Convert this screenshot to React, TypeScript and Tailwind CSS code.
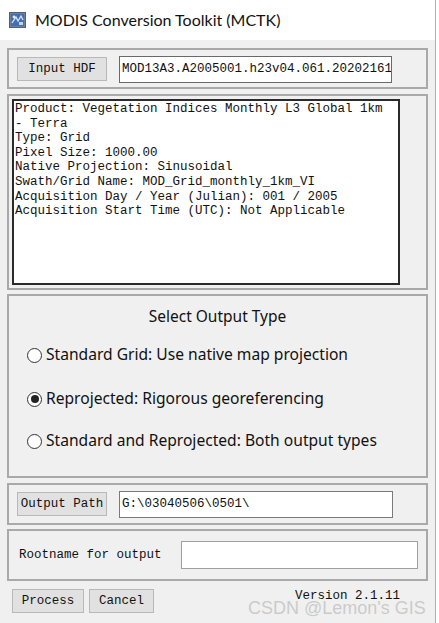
import React from 'react';

const mono = "font-['Liberation_Mono',monospace]";
const ui = "font-['Lato','Noto_Sans',sans-serif]";
const ui2 = "font-['Noto_Sans','Open_Sans',sans-serif]";

const Panel: React.FC<{ className?: string; children: React.ReactNode }> = ({ className = '', children }) => (
  <div className={`w-[421px] border-2 border-[#a9a9a9] ${className}`}>{children}</div>
);

const WinButton: React.FC<{ label: string; className?: string }> = ({ label, className = '' }) => (
  <button className={`h-[24px] bg-[#e1e1e1] border border-[#b8b8b8] text-[12.5px] text-[#111] ${mono} ${className}`}>
    {label}
  </button>
);

const Radio: React.FC<{ checked?: boolean; label: string; className?: string }> = ({ checked, label, className = '' }) => (
  <label className={`flex items-center h-[20px] ${className}`}>
    <span className="w-[15px] h-[15px] rounded-full border border-[#333] bg-white flex items-center justify-center">
      {checked && <span className="w-[8px] h-[8px] rounded-full bg-[#222]" />}
    </span>
    <span className={`ml-[4px] text-[15.6px] text-[#111] ${ui2}`}>{label}</span>
  </label>
);

const info = [
  'Product: Vegetation Indices Monthly L3 Global 1km',
  '- Terra',
  'Type: Grid',
  'Pixel Size: 1000.00',
  'Native Projection: Sinusoidal',
  'Swath/Grid Name: MOD_Grid_monthly_1km_VI',
  'Acquisition Day / Year (Julian): 001 / 2005',
  'Acquisition Start Time (UTC): Not Applicable',
];

export default function App() {
  return (
    <div className="w-[439px] h-[623px] bg-white overflow-hidden">
      <div className="w-[436px] h-full border-r border-[#b0b0b0] flex flex-col">
        {/* title bar */}
        <div className="h-[40px] bg-white flex items-center pl-[9px] shrink-0">
          <svg width="17" height="16" viewBox="0 0 17 16">
            <rect x="0.5" y="0.5" width="16" height="15" fill="#6e7f99" stroke="#55606e" />
            <rect x="2" y="2" width="13" height="12" fill="#3f6fb8" />
            <path d="M3 11 L7 5 L9 9 L12 4 L14 8" stroke="#dfe8f5" strokeWidth="1.3" fill="none" />
            <circle cx="5" cy="5" r="1.4" fill="#e6eef8" />
            <rect x="10" y="10" width="4" height="3" fill="#c8d4e4" />
          </svg>
          <span className={`ml-[9px] text-[16px] text-[#111] ${ui}`}>MODIS Conversion Toolkit (MCTK)</span>
        </div>

        {/* body */}
        <div className="flex-1 bg-[#f0f0f0] pl-[7px] pt-[8px] flex flex-col">
          <Panel className="h-[41px] flex items-center pl-[8px] pt-[1px]">
            <WinButton label="Input HDF" className="w-[90px]" />
            <div className={`ml-[12px] w-[273px] h-[27px] bg-white border border-[#6a6a6a] flex items-center pl-[2px] text-[12.5px] text-[#111] ${mono} overflow-hidden whitespace-nowrap`}>
              MOD13A3.A2005001.h23v04.061.20202161
            </div>
          </Panel>

          <Panel className="h-[196px] mt-[5px] pl-[3px] pt-[3px]">
            <div className={`w-[388px] h-[186px] bg-white border-2 border-[#2a2a2a] pl-[1px] pt-[1px] text-[12.5px] leading-[14.6px] text-[#111] ${mono}`}>
              {info.map((l) => (
                <div key={l} className="whitespace-pre">{l}</div>
              ))}
            </div>
          </Panel>

          <Panel className="h-[184px] mt-[4px] pt-[9px] pl-[18px]">
            <div className={`h-[20px] -ml-[18px] text-center text-[15.5px] text-[#111] ${ui2}`}>Select Output Type</div>
            <Radio label="Standard Grid: Use native map projection" className="mt-[20px]" />
            <Radio checked label="Reprojected: Rigorous georeferencing" className="mt-[24px]" />
            <Radio label="Standard and Reprojected: Both output types" className="mt-[22px]" />
          </Panel>

          <Panel className="h-[42px] mt-[5px] flex items-center pl-[8px]">
            <WinButton label="Output Path" className="w-[90px]" />
            <div className={`ml-[12px] w-[274px] h-[27px] bg-white border border-[#7a7a7a] flex items-center pl-[2px] text-[12.5px] text-[#111] ${mono}`}>
              G:\03040506\0501\
            </div>
          </Panel>

          <Panel className="h-[52px] mt-[4px] flex items-center pl-[10px]">
            <span className={`text-[12.5px] text-[#111] ${mono}`}>Rootname for output</span>
            <div className="ml-[19px] w-[237px] h-[28px] bg-white border border-[#a0a0a0]" />
          </Panel>

          <div className="relative mt-[8px] flex items-start pl-[5px]">
            <WinButton label="Process" className="w-[72px] h-[23px]" />
            <WinButton label="Cancel" className="ml-[5px] w-[65px] h-[23px]" />
            <span className={`ml-[141px] -mt-[2px] text-[12.5px] text-[#111] ${mono}`}>Version 2.1.11</span>
            <span className="absolute left-[241px] top-[8px] text-[18px] leading-[22px] text-[#c4c4c4]/85 font-['Liberation_Sans',sans-serif] whitespace-nowrap">
              CSDN @Lemon's GIS
            </span>
          </div>
        </div>
      </div>
    </div>
  );
}
